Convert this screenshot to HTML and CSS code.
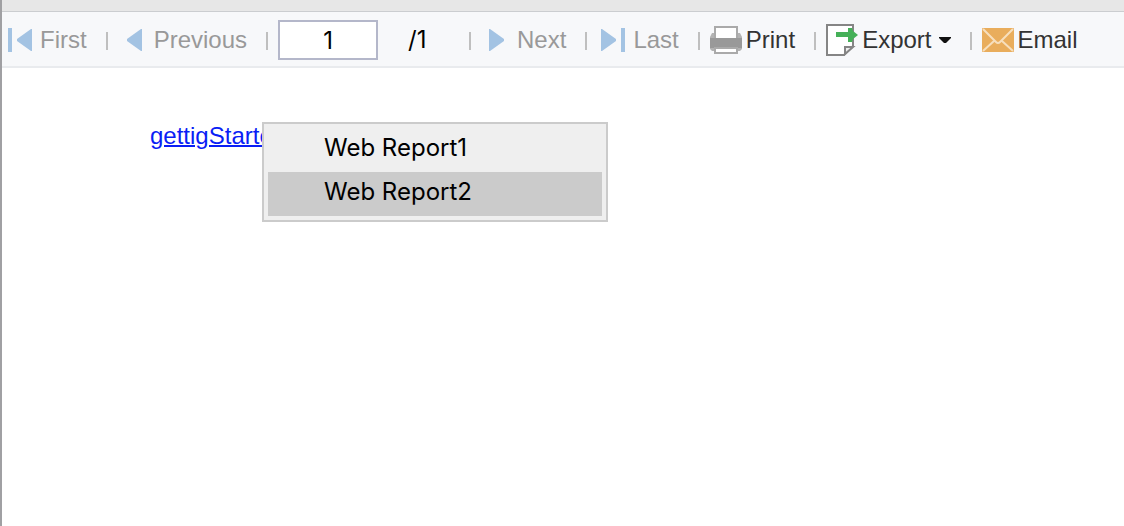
FILE: index.html
```
<!DOCTYPE html>
<html lang="en">
<head>
  <meta charset="utf-8">
  <title>Web Report</title>
  <link rel="stylesheet" href="styles.css">
</head>
<body>
  <div class="viewer">
    <div class="top-strip"></div>

    <div class="toolbar">
      <button type="button" class="tool" disabled>
        <svg class="icon" viewBox="0 0 32 32"><path fill="#a3c3e3" d="M4 4h4v24H4zM28 5v22h-1L13 17v-2L27 5z"/></svg>
        First
      </button>
      <span class="separator"></span>
      <button type="button" class="tool" disabled>
        <svg class="icon" viewBox="0 0 32 32"><path fill="#a3c3e3" d="M24 5v22h-1L9 17v-2L23 5z"/></svg>
        Previous
      </button>
      <span class="separator"></span>
      <input type="text" class="page-number" value="1" aria-label="Page number">
      <span class="page-total">/1</span>
      <span class="separator"></span>
      <button type="button" class="tool" disabled>
        <svg class="icon" viewBox="0 0 32 32"><path fill="#a3c3e3" d="M8 5v22h1l14-10v-2L9 5z"/></svg>
        Next
      </button>
      <span class="separator"></span>
      <button type="button" class="tool" disabled>
        <svg class="icon" viewBox="0 0 32 32"><path fill="#a3c3e3" d="M4 5v22h1l14-10v-2L5 5zM24 4h4v24h-4z"/></svg>
        Last
      </button>
      <span class="separator"></span>
      <button type="button" class="tool">
        <svg class="icon" viewBox="0 0 32 32">
          <path fill="#b3b3b3" d="M2 9h28l2 4v12l-2 2H2l-2-2V13z"/>
          <path fill="#fff" stroke="#aaa" stroke-width="2" d="M5 14V3h22v11"/>
          <path fill="#999" d="M0 14h32v10H0z"/>
          <path fill="#fff" stroke="#aaa" stroke-width="2" d="M5 24h22v5H5z"/>
        </svg>
        Print
      </button>
      <span class="separator"></span>
      <button type="button" class="tool">
        <svg class="icon" viewBox="0 0 32 32">
          <path fill="#fff" stroke="#858585" stroke-width="2" d="M1 1h26v21l-9 9H1z"/>
          <path fill="#eee" stroke="#858585" stroke-width="2" d="M19 30v-7h8z"/>
          <path fill="#45b058" d="M10 8h12V4h4l1 3 5 4-5 4-1 3h-4v-5H10z"/>
        </svg>
        Export
        <svg class="caret" viewBox="0 0 12 8"><path d="M0 1h12v1L7 7H5L0 2z"/></svg>
      </button>
      <span class="separator"></span>
      <button type="button" class="tool">
        <svg class="icon" viewBox="0 0 32 32">
          <rect y="4" width="32" height="24" rx="1" fill="#e9ad5c"/>
          <path fill="none" stroke="#f7dfbd" stroke-width="2" d="M1 5l13 13q2 2 4 0L31 5M1 27l11-10M31 27L20 17"/>
        </svg>
        Email
      </button>
    </div>

    <div class="report">
      <div class="link-cell">
        <a href="#" class="report-link">gettigStarted</a>
        <ul class="link-menu">
          <li><a href="#">Web Report1</a></li>
          <li class="active"><a href="#">Web Report2</a></li>
        </ul>
      </div>
    </div>
  </div>
</body>
</html>
```

FILE: styles.css
```
* {
  box-sizing: border-box;
}

body {
  margin: 0;
  background-color: #ffffff;
  color: #333333;
  font-family: "Liberation Sans", Arial, sans-serif;
  font-size: 24px;
  line-height: 28px;
}

.viewer {
  min-height: 100vh;
  border-left: 2px solid #a0a0a3;
}

.top-strip {
  height: 12px;
  background-color: #e7e7e7;
  border-bottom: 1px solid #cbcdd0;
}

.toolbar {
  display: flex;
  align-items: center;
  height: 56px;
  padding: 2px 0 0 2px;
  background-color: #f7f8fa;
  border-bottom: 2px solid #e9ebee;
  white-space: nowrap;
}

.tool {
  display: flex;
  align-items: center;
  gap: 4px;
  padding: 0;
  border: none;
  background: none;
  color: #333333;
  font: inherit;
  cursor: pointer;
}

.tool:disabled {
  color: #999999;
  cursor: default;
}

.icon {
  flex: none;
  width: 32px;
  height: 32px;
}

.caret {
  width: 12px;
  height: 8px;
  margin-left: 3px;
  fill: #111111;
}

.separator {
  flex: none;
  width: 2px;
  height: 18px;
  margin: 2px 10px 0 19px;
  background-color: #bfbfbf;
}

.caret,
.page-total {
  flex: none;
}

.page-number {
  width: 100px;
  height: 40px;
  padding: 0;
  border: 2px solid #b4b7ca;
  background-color: #ffffff;
  color: #000000;
  font-family: Inter, sans-serif;
  font-size: 24px;
  text-align: center;
}

.page-number:focus {
  outline: none;
}

.page-total {
  width: 72px;
  padding-left: 30px;
  color: #000000;
  font-family: Inter, sans-serif;
}

.report {
  padding: 54px 148px;
}

.link-cell {
  display: inline-block;
  position: relative;
}

.report-link {
  color: #0a1ef5;
  text-decoration: underline;
  text-decoration-thickness: 2px;
}

/* popup menu, opens over the link */
.link-menu {
  position: absolute;
  top: 0;
  left: 112px;
  width: 346px;
  margin: 0;
  padding: 4px;
  list-style: none;
  background-color: #efefef;
  border: 2px solid #cbcbcb;
  font-family: Inter, sans-serif;
}

.link-menu a {
  display: block;
  padding: 6px 0 10px 56px;
  color: #000000;
  text-decoration: none;
}

.link-menu .active,
.link-menu li:hover {
  background-color: #cbcbcb;
}
```
